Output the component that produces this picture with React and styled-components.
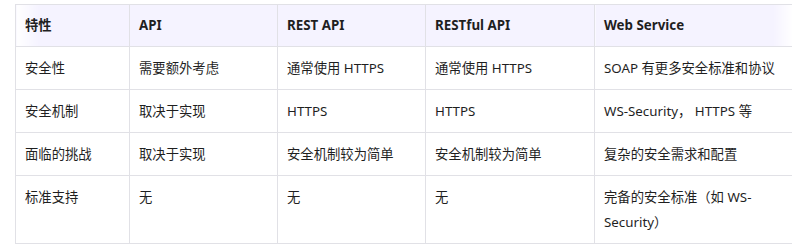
import React from 'react';
import styled, { createGlobalStyle } from 'styled-components';

const GlobalStyle = createGlobalStyle`
  body {
    margin: 0;
    background: #fff;
    font-family: "Noto Sans", "Noto Sans CJK SC", sans-serif;
  }
`;

const Page = styled.div`
  padding: 4px 0 0 15px;
  width: 792px;
  box-sizing: border-box;
  overflow: hidden;
`;

const Table = styled.table`
  border-collapse: collapse;
  table-layout: fixed;
  width: 777px;
  font-size: 13.33px;
  color: #1f1f1f;
  line-height: 25px;
`;

const HeadCell = styled.th`
  text-align: left;
  font-weight: 700;
  padding: 8px 8px 8px 9px;
  border: 1px solid #e1e1e6;
  border-right: ${({ $last }) => ($last ? 'none' : '1px solid #e1e1e6')};
  background: ${({ $edge }) =>
    $edge === 'left'
      ? 'linear-gradient(90deg, #ffffff 0px, #f5f3ff 22px)'
      : $edge === 'right'
      ? 'linear-gradient(90deg, #f5f3ff calc(100% - 20px), #ffffff 100%)'
      : '#f5f3ff'};
`;

const Cell = styled.td`
  vertical-align: top;
  padding: 9px 8px 8px 9px;
  border: 1px solid #e1e1e6;
  border-right: ${({ $last }) => ($last ? 'none' : '1px solid #e1e1e6')};
`;

const columns = [
  { title: '特性', width: 114 },
  { title: 'API', width: 148 },
  { title: 'REST API', width: 148 },
  { title: 'RESTful API', width: 169 },
  { title: 'Web Service', width: 198 },
];

const rows = [
  ['安全性', '需要额外考虑', '通常使用 HTTPS', '通常使用 HTTPS', 'SOAP 有更多安全标准和协议'],
  ['安全机制', '取决于实现', 'HTTPS', 'HTTPS', 'WS-Security， HTTPS 等'],
  ['面临的挑战', '取决于实现', '安全机制较为简单', '安全机制较为简单', '复杂的安全需求和配置'],
  ['标准支持', '无', '无', '无', '完备的安全标准（如 WS-Security）'],
];

export default function App() {
  const lastIdx = columns.length - 1;
  return (
    <Page>
      <GlobalStyle />
      <Table>
        <colgroup>
          {columns.map((c) => (
            <col key={c.title} style={{ width: c.width }} />
          ))}
        </colgroup>
        <thead>
          <tr>
            {columns.map((c, i) => (
              <HeadCell
                key={c.title}
                $last={i === lastIdx}
                $edge={i === 0 ? 'left' : i === lastIdx ? 'right' : undefined}
              >
                {c.title}
              </HeadCell>
            ))}
          </tr>
        </thead>
        <tbody>
          {rows.map((r) => (
            <tr key={r[0]}>
              {r.map((v, i) => (
                <Cell key={i} $last={i === lastIdx}>
                  {v}
                </Cell>
              ))}
            </tr>
          ))}
        </tbody>
      </Table>
    </Page>
  );
}
